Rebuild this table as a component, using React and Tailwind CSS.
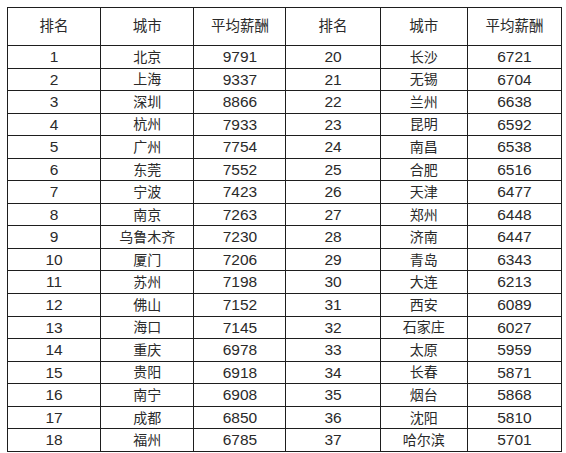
import React from 'react';

const left = [
  ['1', '北京', '9791'], ['2', '上海', '9337'], ['3', '深圳', '8866'], ['4', '杭州', '7933'],
  ['5', '广州', '7754'], ['6', '东莞', '7552'], ['7', '宁波', '7423'], ['8', '南京', '7263'],
  ['9', '乌鲁木齐', '7230'], ['10', '厦门', '7206'], ['11', '苏州', '7198'], ['12', '佛山', '7152'],
  ['13', '海口', '7145'], ['14', '重庆', '6978'], ['15', '贵阳', '6918'], ['16', '南宁', '6908'],
  ['17', '成都', '6850'], ['18', '福州', '6785'],
];

const right = [
  ['20', '长沙', '6721'], ['21', '无锡', '6704'], ['22', '兰州', '6638'], ['23', '昆明', '6592'],
  ['24', '南昌', '6538'], ['25', '合肥', '6516'], ['26', '天津', '6477'], ['27', '郑州', '6448'],
  ['28', '济南', '6447'], ['29', '青岛', '6343'], ['30', '大连', '6213'], ['31', '西安', '6089'],
  ['32', '石家庄', '6027'], ['33', '太原', '5959'], ['34', '长春', '5871'], ['35', '烟台', '5868'],
  ['36', '沈阳', '5810'], ['37', '哈尔滨', '5701'],
];

const headers = ['排名', '城市', '平均薪酬', '排名', '城市', '平均薪酬'];

const App = () => {
  return (
    <div
      className="w-[566px] h-[453px] bg-white pt-[7px] pl-[7px] text-[#2a2a2a]"
      style={{ fontFamily: '"Liberation Sans", "Noto Sans CJK SC", sans-serif' }}
    >
      <table className="table-fixed border-collapse w-[555px]">
        <colgroup>
          <col className="w-[93px]" />
          <col className="w-[93px]" />
          <col className="w-[92px]" />
          <col className="w-[94px]" />
          <col className="w-[87px]" />
          <col className="w-[94px]" />
        </colgroup>
        <thead>
          <tr className="h-[38px]">
            {headers.map((h, i) => (
              <th key={i} className="border border-[#1e1e1e] font-normal text-[14.5px] text-center">
                {h}
              </th>
            ))}
          </tr>
        </thead>
        <tbody>
          {left.map((row, i) => (
            <tr key={i} className="h-[22.55px]">
              {[...row, ...right[i]].map((cell, j) => (
                <td
                  key={j}
                  className={
                    j % 3 === 1
                      ? 'border border-[#1e1e1e] text-[14px] leading-none text-center p-0'
                      : 'border border-[#1e1e1e] text-[15.5px] leading-none text-center p-0'
                  }
                >
                  {cell}
                </td>
              ))}
            </tr>
          ))}
        </tbody>
      </table>
    </div>
  );
};

export default App;
